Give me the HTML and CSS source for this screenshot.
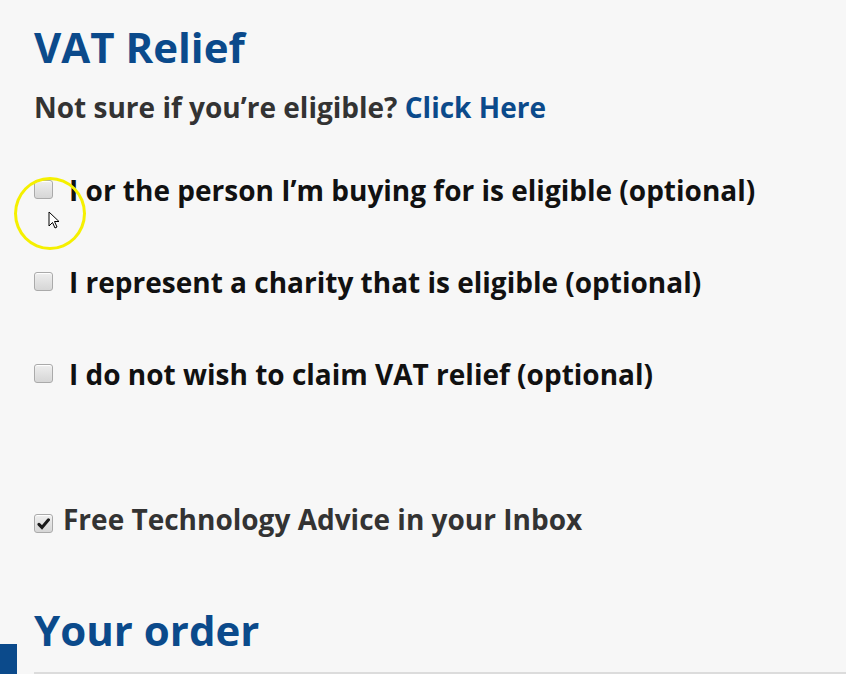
FILE: index.html
```html
<!DOCTYPE html>
<html>
<head>
<meta charset="utf-8">
<link rel="stylesheet" href="styles.css">
</head>
<body>
<div class="page">
  <h1 class="title">VAT Relief</h1>
  <p class="sub">Not sure if you’re eligible? <a href="#">Click Here</a></p>
  <div class="opts">
    <label class="opt"><span class="box"></span><span>I or the person I’m buying for is eligible (optional)</span></label>
    <label class="opt"><span class="box"></span><span>I represent a charity that is eligible (optional)</span></label>
    <label class="opt"><span class="box"></span><span>I do not wish to claim VAT relief (optional)</span></label>
  </div>
  <label class="news"><span class="box checked"><svg viewBox="0 0 12 12" width="13" height="13"><path d="M1.8 6.8 L4.6 9.6 L10.6 2.6" fill="none" stroke="#1a1a1a" stroke-width="2.8" stroke-linecap="round"/></svg></span><span>Free Technology Advice in your Inbox</span></label>
  <h2 class="title order">Your order</h2>
  <div class="rule"></div>
</div>
<div class="tab"></div>
<div class="ring"></div>
<svg class="cursor" viewBox="0 0 12 19" width="12" height="19"><path d="M1 1 L1 15 L4.5 11.5 L7 17 L9 16 L6.5 10.5 L11 10.5 Z" fill="#fff" stroke="#000" stroke-width="1"/></svg>
</body>
</html>
```
FILE: styles.css
```css
html, body { margin: 0; padding: 0; }
body {
  background: #f7f7f7;
  font-family: "Open Sans", "Liberation Sans", sans-serif;
  font-weight: 700;
  width: 846px;
  height: 674px;
  overflow: hidden;
  position: relative;
}
.page { padding: 21px 0 0 34px; }
.title {
  color: #0b4a8b;
  font-size: 42px;
  line-height: 52px;
  margin: 0;
  font-weight: 700;
}
.sub {
  margin: 15px 0 0;
  font-size: 28px;
  line-height: 38px;
  color: #333;
}
.sub a { color: #0b4a8b; text-decoration: none; }
.opts { margin-top: 45px; display: flex; flex-direction: column; gap: 54px; }
.opt { display: flex; align-items: center; gap: 16px; font-size: 28px; line-height: 38px; color: #111; }
.opt .box { margin-top: -2px; }
.box {
  width: 17px; height: 17px;
  border: 1px solid #aaa;
  border-radius: 3px;
  background: linear-gradient(#eee, #d6d6d6);
  box-shadow: inset 0 1px 1px #fff;
  flex: none;
  display: flex; align-items: center; justify-content: center;
}
.news { display: flex; align-items: center; gap: 10px; margin-top: 107px; font-size: 28px; line-height: 38px; color: #333; }
.news .box { margin-top: 8px; }
.order { margin-top: 66px; }
.rule { height: 2px; background: #dcdcdc; margin-top: 16px; }
.tab { position: absolute; left: 0; top: 644px; width: 17px; height: 30px; background: #0b4a8b; }
.ring {
  position: absolute; left: 14px; top: 177px; width: 72px; height: 73px;
  border: 3px solid #f5f000; border-radius: 50%; box-sizing: border-box;
}
.cursor { position: absolute; left: 48px; top: 211px; }
```
